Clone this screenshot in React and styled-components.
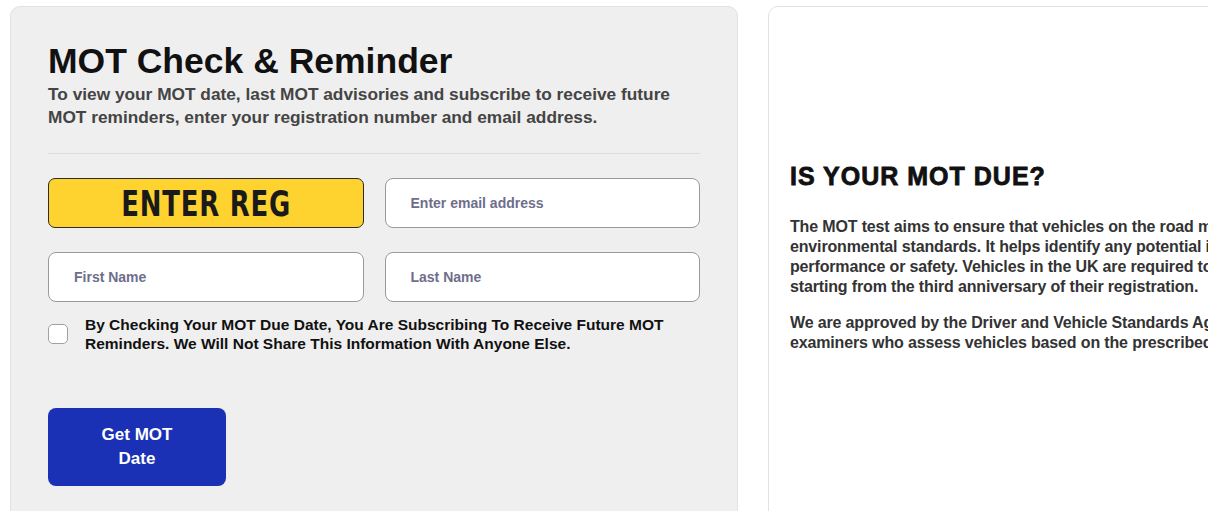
import styled, { createGlobalStyle } from "styled-components";

const GlobalStyle = createGlobalStyle`
	body {
		margin: 0;
		background: #ffffff;
		font-family: "Liberation Sans", Arial, sans-serif;
		overflow: hidden;
	}
`;

const App = () => {
	return (
		<>
			<GlobalStyle />
			<Page>
				<FormCard>
					<Title>MOT Check &amp; Reminder</Title>
					<Intro>
						To view your MOT date, last MOT advisories and subscribe to receive future
						MOT reminders, enter your registration number and email address.
					</Intro>
					<Divider />
					<FieldGrid>
						<Plate>
							<span>ENTER REG</span>
						</Plate>
						<Field>Enter email address</Field>
						<Field>First Name</Field>
						<Field>Last Name</Field>
					</FieldGrid>
					<Consent>
						<CheckBox />
						<span>
							By Checking Your MOT Due Date, You Are Subscribing To Receive Future MOT
							Reminders. We Will Not Share This Information With Anyone Else.
						</span>
					</Consent>
					<SubmitButton>Get MOT Date</SubmitButton>
				</FormCard>
				<InfoCard>
					<InfoTitle>IS YOUR MOT DUE?</InfoTitle>
					<InfoText>
						The MOT test aims to ensure that vehicles on the road meet safety and
						<br />
						environmental standards. It helps identify any potential issues affecting
						<br />
						performance or safety. Vehicles in the UK are required to undergo an MOT
						<br />
						starting from the third anniversary of their registration.
					</InfoText>
					<InfoText>
						We are approved by the Driver and Vehicle Standards Agency, with qualified
						<br />
						examiners who assess vehicles based on the prescribed standards.
					</InfoText>
				</InfoCard>
			</Page>
		</>
	);
};

export default App;

const Page = styled.div`
	display: flex;
	gap: 30px;
	padding: 6px 0 0 10px;
	width: 1600px;
`;

const FormCard = styled.div`
	width: 652px;
	flex-shrink: 0;
	background: #efefef;
	border: 1px solid #dce4e6;
	border-radius: 10px;
	padding: 34px 37px 38px 37px;
`;

const Title = styled.h1`
	margin: 0;
	font-size: 35.5px;
	line-height: 40px;
	font-weight: 700;
	color: #111111;
`;

const Intro = styled.p`
	margin: 2px 0 0;
	font-size: 17.3px;
	line-height: 23px;
	font-weight: 700;
	color: #444444;
`;

const Divider = styled.hr`
	margin: 24px 0 24px;
	border: none;
	border-top: 1px solid #d6dede;
`;

const FieldGrid = styled.div`
	display: grid;
	grid-template-columns: 1fr 1fr;
	column-gap: 21px;
	row-gap: 24px;
`;

const Plate = styled.div`
	height: 48px;
	display: flex;
	align-items: center;
	justify-content: center;
	overflow: hidden;
	background: #fed22f;
	border: 1px solid #2b2b2b;
	border-radius: 7px;
	font-family: "DejaVu Sans Condensed", "DejaVu Sans", sans-serif;
	font-weight: 700;
	font-size: 36px;
	letter-spacing: 1px;
	color: #1a1a1a;
	span {
		display: inline-block;
		transform: scaleX(0.8);
		white-space: nowrap;
	}
`;

const Field = styled.div`
	height: 48px;
	display: flex;
	align-items: center;
	padding-left: 25px;
	background: #ffffff;
	border: 1px solid #9a9a9a;
	border-radius: 8px;
	font-size: 14px;
	font-weight: 700;
	color: #6e6e8c;
`;

const Consent = styled.label`
	display: flex;
	align-items: center;
	gap: 17px;
	margin-top: 13px;
	font-size: 15.5px;
	line-height: 19px;
	font-weight: 700;
	color: #111111;
`;

const CheckBox = styled.span`
	width: 18px;
	height: 18px;
	flex-shrink: 0;
	background: #ffffff;
	border: 1px solid #a0a0a0;
	border-radius: 5px;
`;

const SubmitButton = styled.button`
	display: block;
	margin-top: 55px;
	width: 178px;
	height: 78px;
	padding: 0 40px;
	background: #1a30b5;
	border: none;
	border-radius: 8px;
	font-family: "Liberation Sans", Arial, sans-serif;
	font-size: 17px;
	line-height: 24px;
	font-weight: 700;
	color: #ffffff;
`;

const InfoCard = styled.div`
	width: 700px;
	flex-shrink: 0;
	display: flex;
	flex-direction: column;
	justify-content: center;
	background: #ffffff;
	border: 1px solid #dce4e6;
	border-radius: 10px;
	padding: 0 22px 0 21px;
`;

const InfoTitle = styled.h2`
	margin: 0 0 26px;
	font-size: 25px;
	line-height: 30px;
	font-weight: 700;
	letter-spacing: 1px;
	-webkit-text-stroke: 0.8px #111111;
	color: #111111;
`;

const InfoText = styled.p`
	margin: 0 0 17px;
	font-size: 16px;
	line-height: 19.7px;
	font-weight: 700;
	letter-spacing: -0.15px;
	white-space: nowrap;
	color: #333333;
`;
